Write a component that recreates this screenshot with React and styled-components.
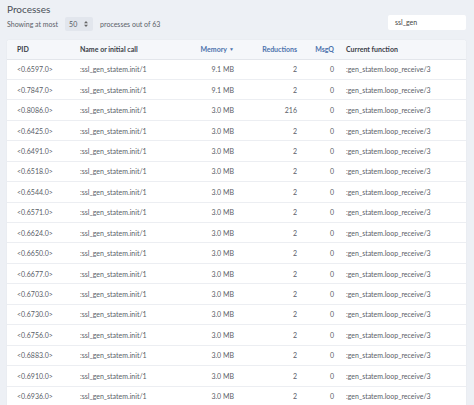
import React from 'react';
import styled, { createGlobalStyle } from 'styled-components';

const GlobalStyle = createGlobalStyle`
  html, body {
    margin: 0;
    padding: 0;
    background: #edf0f5;
    font-family: Lato, "Open Sans", sans-serif;
  }
`

const Page = styled.div`
  width: 474px;
  height: 405px;
  overflow: hidden;
  padding: 3px 8px 0 7px;
  box-sizing: border-box;
`

const Title = styled.h1`
  margin: 0;
  font-size: 10px;
  font-weight: 400;
  color: #4a4f57;
  line-height: 12px;
`

const Controls = styled.div`
  display: flex;
  align-items: center;
  justify-content: space-between;
  height: 16px;
  margin-top: -1px;
`

const Showing = styled.div`
  display: flex;
  align-items: center;
  gap: 7px;
  font-size: 7px;
  color: #5a6068;
  margin-top: 3px;
`

const Select = styled.div`
  display: flex;
  align-items: center;
  justify-content: space-between;
  width: 28px;
  height: 14px;
  padding: 0 5px 0 4px;
  box-sizing: border-box;
  background: #e2e6ed;
  border-radius: 2px;
  font-size: 7px;
  color: #555b63;
`

const Search = styled.div`
  width: 78px;
  height: 15px;
  background: #fff;
  border-radius: 2px;
  box-sizing: border-box;
  padding-left: 7px;
  display: flex;
  align-items: center;
  font-size: 7px;
  color: #444;
`

const Card = styled.div`
  margin-top: 10px;
  background: #fff;
  border-radius: 3px;
  box-shadow: 0 0 2px rgba(0, 0, 0, 0.06);
  overflow: hidden;
`

const Table = styled.table`
  width: 100%;
  border-collapse: collapse;
  table-layout: fixed;
  font-size: 7px;
`

const HeadRow = styled.tr`
  background: #f5f7fa;
  height: 19px;
  border-bottom: 1px solid #e3e6eb;
`

const Th = styled.th`
  text-align: ${p => (p.right ? 'right' : 'left')};
  font-weight: 700;
  color: ${p => (p.link ? '#4d73ad' : '#3b4048')};
  padding: 0;
  padding-left: ${p => p.pl || 0}px;
  white-space: nowrap;
`

const Row = styled.tr`
  height: 20.45px;
  border-bottom: 1px solid #eceef2;
`

const Td = styled.td`
  text-align: ${p => (p.right ? 'right' : 'left')};
  color: #5a6068;
  padding: 0;
  padding-left: ${p => p.pl || 0}px;
  white-space: nowrap;
`

const Caret = styled.span`
  font-size: 5px;
  margin-left: 2px;
  vertical-align: 1px;
`

const SortIcon = () => (
  <svg width="4" height="6" viewBox="0 0 4 6">
    <path d="M2 0 L4 2.3 H0 Z M2 6 L4 3.7 H0 Z" fill="#666" />
  </svg>
)

const pids = [
  ['6597', '9.1', 2], ['7847', '9.1', 2], ['8086', '3.0', 216], ['6425', '3.0', 2],
  ['6491', '3.0', 2], ['6518', '3.0', 2], ['6544', '3.0', 2], ['6571', '3.0', 2],
  ['6624', '3.0', 2], ['6650', '3.0', 2], ['6677', '3.0', 2], ['6703', '3.0', 2],
  ['6730', '3.0', 2], ['6756', '3.0', 2], ['6883', '3.0', 2], ['6910', '3.0', 2],
  ['6936', '3.0', 2],
]

export default function App() {
  return (
    <Page>
      <GlobalStyle />
      <Title>Processes</Title>
      <Controls>
        <Showing>
          <span>Showing at most</span>
          <Select>
            <span>50</span>
            <SortIcon />
          </Select>
          <span>processes out of 63</span>
        </Showing>
        <Search>ssl_gen</Search>
      </Controls>
      <Card>
        <Table>
          <colgroup>
            <col style={{ width: 62 }} />
            <col style={{ width: 100 }} />
            <col style={{ width: 65 }} />
            <col style={{ width: 63 }} />
            <col style={{ width: 37 }} />
            <col />
          </colgroup>
          <thead>
            <HeadRow>
              <Th pl={10}>PID</Th>
              <Th pl={11}>Name or initial call</Th>
              <Th right link>Memory<Caret>▼</Caret></Th>
              <Th right link>Reductions</Th>
              <Th right link>MsgQ</Th>
              <Th pl={12}>Current function</Th>
            </HeadRow>
          </thead>
          <tbody>
            {pids.map(([id, mem, red]) => (
              <Row key={id}>
                <Td pl={10}>{`<0.${id}.0>`}</Td>
                <Td pl={11}>:ssl_gen_statem.init/1</Td>
                <Td right>{mem} MB</Td>
                <Td right>{red}</Td>
                <Td right>0</Td>
                <Td pl={12}>:gen_statem.loop_receive/3</Td>
              </Row>
            ))}
          </tbody>
        </Table>
      </Card>
    </Page>
  )
}
